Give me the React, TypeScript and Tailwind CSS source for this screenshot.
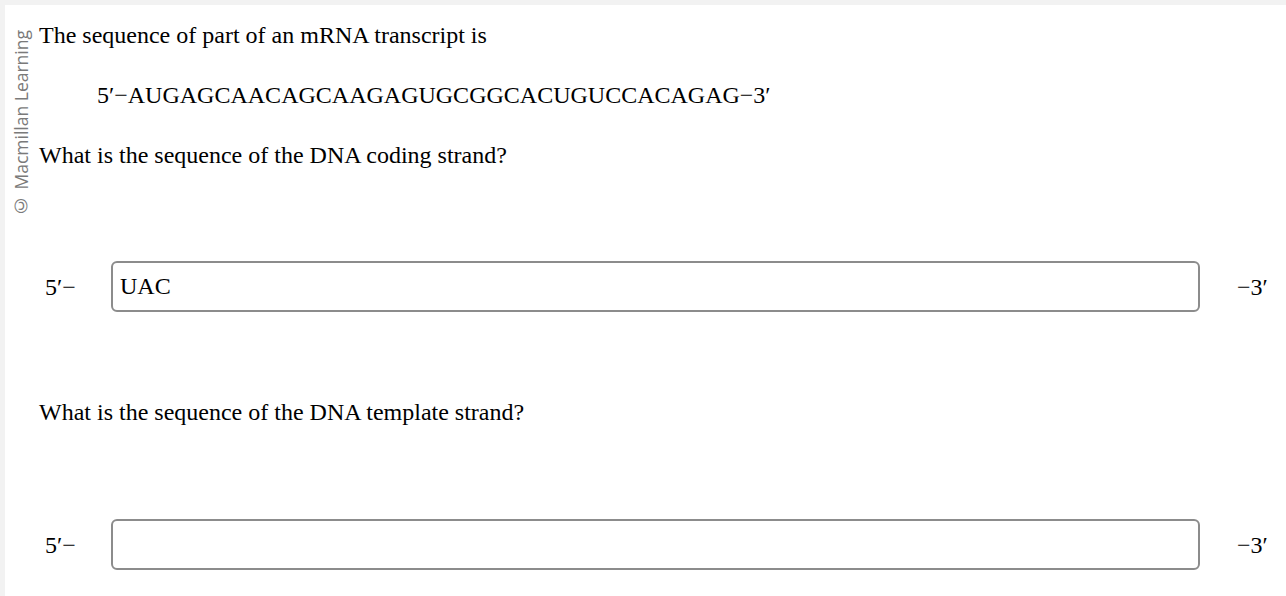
import React from "react"

const serif = "font-['Liberation_Serif','Times_New_Roman',serif] text-[24px] leading-[26px] text-black"

function StrandRow({ value }: { value: string }) {
  return (
    <div className={`flex items-center ${serif}`}>
      <span className="w-[72px] pl-[6px] shrink-0">5′−</span>
      <input
        defaultValue={value}
        className={`flex-1 h-[51px] border-2 border-[#8c8c8c] rounded-[6px] px-[7px] outline-none bg-white ${serif}`}
      />
      <span className="w-[86px] pl-[37px] shrink-0">−3′</span>
    </div>
  )
}

export default function App() {
  return (
    <div className="h-[596px] bg-[#f2f2f2] pt-[5px] pl-[5px] overflow-hidden">
      <div className="h-full bg-white flex">
        {/* watermark */}
        <div className="w-[34px] shrink-0 flex justify-center pt-[25px]">
          <span className="[writing-mode:vertical-rl] rotate-180 font-['Open_Sans',sans-serif] text-[17.5px] leading-none text-[#7a7a7a] h-fit whitespace-nowrap">
            © Macmillan Learning
          </span>
        </div>

        {/* question */}
        <div className={`flex-1 pt-[17px] ${serif}`}>
          <p>The sequence of part of an mRNA transcript is</p>
          <p className="mt-[34px] pl-[58px]">5′−AUGAGCAACAGCAAGAGUGCGGCACUGUCCACAGAG−3′</p>
          <p className="mt-[34px]">What is the sequence of the DNA coding strand?</p>
          <div className="mt-[93px]">
            <StrandRow value="UAC" />
          </div>
          <p className="mt-[87px]">What is the sequence of the DNA template strand?</p>
          <div className="mt-[94px]">
            <StrandRow value="" />
          </div>
        </div>
      </div>
    </div>
  )
}
